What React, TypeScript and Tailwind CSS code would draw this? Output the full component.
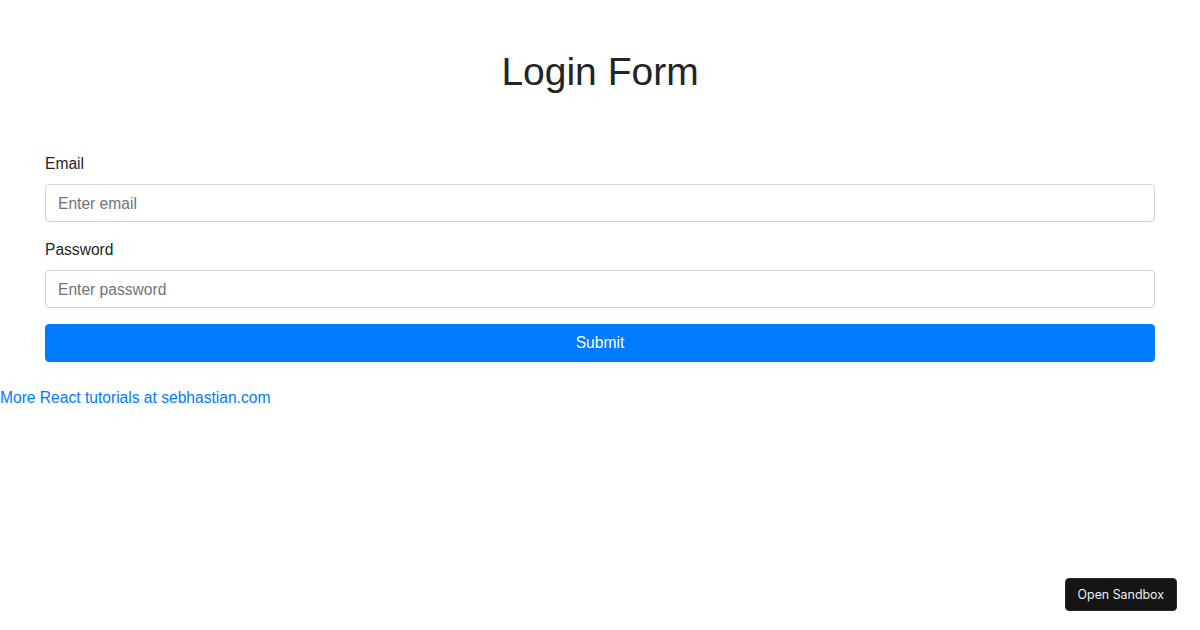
import React from "react";

const App: React.FC = () => {
  return (
    <div className="h-[630px] overflow-hidden bg-white text-[#212529] font-['Liberation_Sans',Arial,sans-serif] text-[15.6px] leading-6">
      <div className="mx-auto w-[1140px] px-[15px] pt-12">
        <h1 className="mb-2 text-center text-[39px] leading-[48px] font-normal">Login Form</h1>
        <form className="mt-14 mb-6" onSubmit={(e) => e.preventDefault()}>
          <div className="mb-4">
            <label className="block mb-2">Email</label>
            <input
              type="email"
              placeholder="Enter email"
              className="block w-full h-[38px] px-3 pt-[7px] pb-[5px] border border-[#ced4da] rounded-[4px] text-[#495057] placeholder:text-[#6c757d] outline-none"
            />
          </div>
          <div className="mb-4">
            <label className="block mb-2">Password</label>
            <input
              type="password"
              placeholder="Enter password"
              className="block w-full h-[38px] px-3 pt-[7px] pb-[5px] border border-[#ced4da] rounded-[4px] text-[#495057] placeholder:text-[#6c757d] outline-none"
            />
          </div>
          <button
            type="submit"
            className="block w-full h-[38px] rounded-[4px] bg-[#007bff] text-white border border-[#007bff]"
          >
            Submit
          </button>
        </form>
      </div>
      <a href="#" className="text-[#007bff]">
        More React tutorials at sebhastian.com
      </a>
      {/* CodeSandbox overlay */}
      <button className="fixed right-[23px] bottom-[19px] h-[33px] px-3 rounded-[4px] bg-[#151515] border border-[#2a2a2a] text-[12.4px] text-[#f0f0f0] font-['Inter',sans-serif]">
        Open Sandbox
      </button>
    </div>
  );
};

export default App;
